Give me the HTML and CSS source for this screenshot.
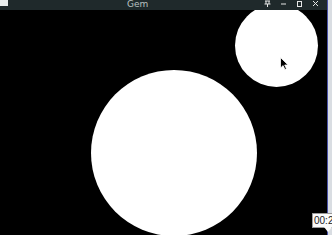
FILE: index.html
```html
<!DOCTYPE html>
<html lang="en">
<head>
  <meta charset="UTF-8">
  <title>Gem</title>
  <link rel="stylesheet" href="styles.css">
</head>
<body>
  <div class="screen">
    <!-- Window -->
    <div class="window">
      <div class="titlebar">
        <span class="app-icon"></span>
        <span class="title">Gem</span>
        <div class="controls">
          <svg class="ctl" width="7" height="7" viewBox="0 0 7 7"><path d="M1 1h5M2 1v3M5 1v3M0.5 4h6M3.5 4v3" stroke="#e6e6e6" stroke-width="1" fill="none"/></svg>
          <svg class="ctl" width="7" height="7" viewBox="0 0 7 7"><path d="M1 4h5" stroke="#e6e6e6" stroke-width="1"/></svg>
          <svg class="ctl" width="7" height="7" viewBox="0 0 7 7"><rect x="1.5" y="1.5" width="4" height="5" stroke="#e6e6e6" stroke-width="1" fill="none"/></svg>
          <svg class="ctl" width="7" height="7" viewBox="0 0 7 7"><path d="M1 1l5 5M6 1l-5 5" stroke="#e6e6e6" stroke-width="1"/></svg>
        </div>
      </div>
      <div class="canvas">
        <div class="circle small"></div>
        <div class="circle big"></div>
        <svg class="cursor" width="9" height="13" viewBox="0 0 9 13">
          <path d="M0.5 0.5v10.5l2.6-2.4 1.8 3.9 1.6-0.7-1.8-3.8h3.4z" fill="#000" stroke="#fff" stroke-width="0.8"/>
        </svg>
      </div>
    </div>
    <div class="side"></div>
    <div class="tooltip">00:2</div>
  </div>
</body>
</html>
```

FILE: styles.css
```css
/* General */
html, body {
  margin: 0;
  padding: 0;
  background: #000;
}

body {
  width: 332px;
  height: 235px;
  overflow: hidden;
  font-family: "DejaVu Sans", sans-serif;
}

.screen {
  display: flex;
  height: 235px;
  position: relative;
}

/* Window */
.window {
  width: 327px;
  display: flex;
  flex-direction: column;
}

.titlebar {
  height: 10px;
  background-color: #1f292b;
  display: flex;
  align-items: center;
  position: relative;
}

.app-icon {
  position: absolute;
  left: 0;
  top: 0;
  width: 8px;
  height: 6px;
  background: #e8ecec;
}

.title {
  margin-left: 127px;
  color: #b8c0c0;
  font-size: 9px;
  line-height: 10px;
  margin-top: -3px;
}

.controls {
  margin-left: auto;
  margin-right: 8px;
  display: flex;
  gap: 9px;
  margin-top: -3px;
}

.ctl {
  display: block;
}

/* Canvas */
.canvas {
  flex: 1;
  background: #000;
  position: relative;
  overflow: hidden;
}

.circle {
  position: absolute;
  background: #fff;
  border-radius: 50%;
}

.small {
  left: 235px;
  top: -6px;
  width: 83px;
  height: 83px;
}

.big {
  left: 91px;
  top: 60px;
  width: 166px;
  height: 166px;
}

.cursor {
  position: absolute;
  left: 280px;
  top: 47px;
}

/* Tooltip over the window edge */
.tooltip {
  position: absolute;
  left: 312px;
  top: 213px;
  width: 20px;
  height: 15px;
  box-sizing: border-box;
  padding-left: 1px;
  background: #fafafa;
  border: 1px solid #9a9a9a;
  border-right: none;
  color: #222;
  font-family: "Liberation Sans", Arial, sans-serif;
  font-size: 10px;
  line-height: 13px;
  white-space: nowrap;
}

.tooltip::after {
  content: "";
  position: absolute;
  left: 11px;
  bottom: -5px;
  border-left: 4px solid transparent;
  border-right: 4px solid transparent;
  border-top: 5px solid #fafafa;
}

/* Right panel edge */
.side {
  width: 5px;
  background: #d9dde2;
  border-left: 1px solid #4a52a8;
  box-sizing: border-box;
}
```
